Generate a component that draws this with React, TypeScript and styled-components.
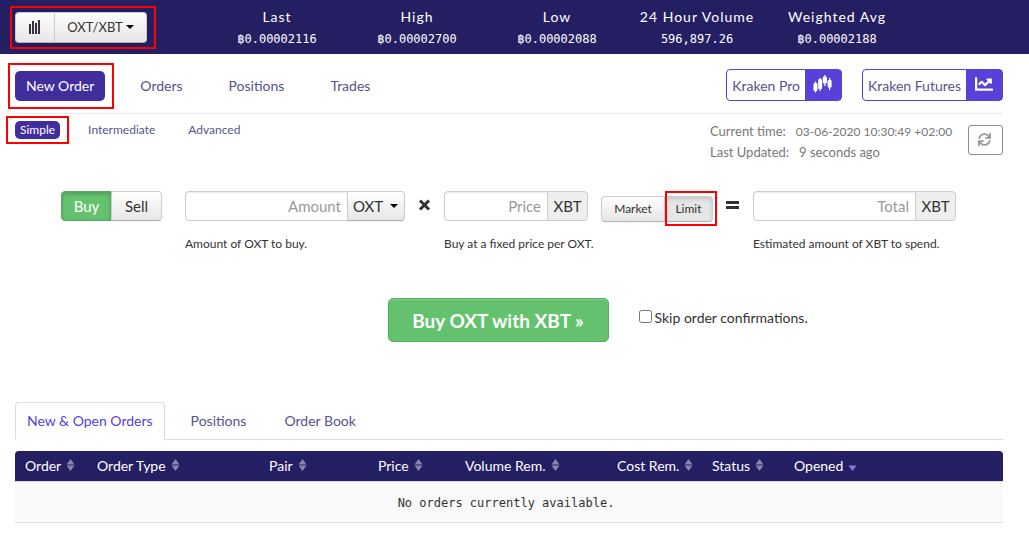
import React from 'react';
import styled, { createGlobalStyle, css } from 'styled-components';
import { FaChartLine, FaSync } from 'react-icons/fa';

const GlobalStyle = createGlobalStyle`
  *, *::before, *::after { box-sizing: border-box; }
  body { margin: 0; background: #fff; color: #333; font: 14px/20px Lato, "Open Sans", sans-serif; }
  button, input, select { font: inherit; color: inherit; margin: 0; }
  a { color: inherit; text-decoration: none; }
`;

const mono = css`
  font-family: "DejaVu Sans Mono", "Liberation Mono", monospace;
  font-size: 12px;
`;

const raised = css`
  border: 1px solid #ccc;
  border-bottom-color: #b3b3b3;
  background: linear-gradient(#fff, #e6e6e6);
  box-shadow: inset 0 1px 0 rgba(255, 255, 255, 0.2), 0 1px 2px rgba(0, 0, 0, 0.05);
`;

const Marked = styled.div`
  position: relative;
  display: flex;
`;

const Mark = styled.span<{ $inset: string }>`
  position: absolute;
  inset: ${(p) => p.$inset};
  border: 2px solid #f00;
  pointer-events: none;
`;

const Header = styled.header`
  display: flex;
  align-items: flex-start;
  height: 54px;
  padding: 12px 15px 0;
  background: #241e63;
  color: #fff;
`;

const PairButton = styled.button`
  ${raised}
  display: flex;
  align-items: center;
  justify-content: center;
  gap: 3px;
  height: 31px;
  padding: 0 12px 1px;
  color: #333;
  font-size: 13px;
  &:first-child { width: 40px; padding: 0 1px 1px 0; border-radius: 4px 0 0 4px; }
  &:nth-child(2) { width: 93px; margin-left: -1px; border-radius: 0 4px 4px 0; }
`;

const Stats = styled.dl`
  display: flex;
  margin: 0 0 0 60px;
`;

const Stat = styled.div`
  width: 140px;
  text-align: center;
`;

const StatName = styled.dt`
  margin-top: -6px;
  font-size: 14px;
  line-height: 22px;
  letter-spacing: 1px;
  white-space: nowrap;
`;

const StatValue = styled.dd`
  ${mono}
  margin: 0;
  line-height: 22px;
`;

const Page = styled.main`
  padding: 0 26px 0 15px;
`;

const Bar = styled.div`
  display: flex;
  align-items: center;
  justify-content: space-between;
  height: 60px;
  padding-top: 4px;
  border-bottom: 1px solid #e8e8f5;
`;

const Nav = styled.nav<{ $gap: number }>`
  display: flex;
  gap: ${(p) => p.$gap}px;
`;

const NavLink = styled.a<{ $active?: boolean }>`
  padding: 5px 11px;
  border-radius: 5px;
  color: ${(p) => (p.$active ? '#fff' : '#56548a')};
  background: ${(p) => (p.$active ? '#412d9c' : 'transparent')};
`;

const SubLink = styled(NavLink)`
  padding: 0 5px;
  font-size: 12px;
  line-height: 18px;
`;

const Links = styled.div`
  display: flex;
  gap: 20px;
  margin-top: -2px;
`;

const Product = styled.a`
  display: flex;
  height: 32px;
  border: 1px solid #5841d8;
  border-radius: 4px;
  background: #fff;
  color: #56548a;
  line-height: 31px;
`;

const ProductName = styled.span`
  padding: 0 5px;
`;

const ProductIcon = styled.span`
  display: flex;
  justify-content: center;
  width: 36px;
  padding-top: 5px;
  background: #5841d8;
  color: #fff;
`;

const SubBar = styled.div`
  display: flex;
  align-items: flex-start;
  justify-content: space-between;
  padding-top: 7px;
`;

const Status = styled.div`
  display: flex;
  gap: 16px;
`;

const Clock = styled.div`
  width: 242px;
  color: #777;
  font-size: 13px;
  line-height: 21px;
`;

const ClockRow = styled.div`
  display: flex;
  gap: 10px;
  white-space: nowrap;
`;

const Time = styled.time`
  font-size: 12px;
`;

const Refresh = styled.button`
  display: flex;
  align-items: center;
  justify-content: center;
  width: 35px;
  height: 30px;
  margin-top: 4px;
  padding: 0 2px 1px 0;
  border: 1px solid #8c8c8c;
  border-radius: 3px;
  background: #fff;
  color: #999;
`;

const OrderForm = styled.form`
  padding: 28px 47px 0 46px;
`;

const Fields = styled.div`
  display: flex;
  align-items: flex-start;
`;

const Sides = styled.div`
  display: flex;
  margin-right: 23px;
`;

const Side = styled.button<{ $on?: boolean }>`
  ${raised}
  width: 51px;
  height: 30px;
  margin-left: -1px;
  padding: 0;
  border-radius: 0 4px 4px 0;
  font-size: 15px;
  ${(p) =>
    p.$on &&
    css`
      margin-left: 0;
      border-color: #56ac5d;
      border-radius: 4px 0 0 4px;
      background: #64c26e;
      box-shadow: inset 0 2px 4px rgba(0, 0, 0, 0.2);
      color: #fff;
    `}
`;

const Field = styled.div<{ $grow: number }>`
  flex: ${(p) => p.$grow} 1 0;
  min-width: 0;
`;

const InputGroup = styled.div`
  display: flex;
  height: 30px;
`;

const Input = styled.input`
  flex: 1;
  min-width: 0;
  padding: 0 6px;
  border: 1px solid #ccc;
  border-radius: 4px 0 0 4px;
  box-shadow: inset 0 1px 1px rgba(0, 0, 0, 0.08);
  font-size: 15px;
  text-align: right;
  &::placeholder { color: #999; opacity: 1; }
`;

const AddOn = styled.span`
  width: 41px;
  margin-left: -1px;
  border: 1px solid #ccc;
  border-radius: 0 4px 4px 0;
  background: #eee;
  font-size: 15px;
  line-height: 28px;
  text-align: center;
`;

const UnitBox = styled.span`
  ${raised}
  position: relative;
  display: flex;
  width: 58px;
  margin-left: -1px;
  border-radius: 0 4px 4px 0;
  & > svg { position: absolute; right: 6px; top: 12px; pointer-events: none; }
`;

const Unit = styled.select`
  flex: 1;
  appearance: none;
  padding: 0 5px;
  border: 0;
  background: none;
  font-size: 15px;
`;

const Help = styled.p`
  margin: 14px 0 0;
  font-size: 12px;
  line-height: 18px;
  white-space: nowrap;
`;

const Operator = styled.span`
  display: flex;
  margin: 7px 13px 0;
`;

const Kinds = styled(Marked)`
  margin: 5px 0 0 13px;
`;

const Kind = styled.button<{ $on?: boolean }>`
  ${raised}
  width: 64px;
  height: 26px;
  padding: 0;
  border-radius: 4px 0 0 4px;
  font-size: 12px;
  ${(p) =>
    p.$on &&
    css`
      width: 49px;
      margin-left: -1px;
      border-radius: 0 4px 4px 0;
      background: #e6e6e6;
      box-shadow: inset 0 2px 4px rgba(0, 0, 0, 0.15);
    `}
`;

const SubmitRow = styled.div`
  display: grid;
  grid-template-columns: 1fr auto 1fr;
  align-items: start;
  column-gap: 30px;
  margin-top: 45px;
  padding-right: 22px;
`;

const Submit = styled.button`
  grid-column: 2;
  width: 221px;
  height: 44px;
  padding: 1px 0 0;
  border: 1px solid #56ac5d;
  border-radius: 5px;
  background: #64c26e;
  box-shadow: inset 0 1px 0 rgba(255, 255, 255, 0.2);
  color: #fff;
  font-size: 19px;
  font-weight: 700;
`;

const Skip = styled.label`
  display: flex;
  align-items: center;
  gap: 3px;
  padding-top: 10px;
  white-space: nowrap;
  & > input { width: 13px; height: 13px; margin-bottom: 3px; }
`;

const Tabs = styled.div`
  display: flex;
  margin-top: 60px;
  border-bottom: 1px solid #ddd;
`;

const Tab = styled.button<{ $on?: boolean }>`
  height: 38px;
  margin: 0 0 -1px;
  padding: 0 11px;
  border: 1px solid transparent;
  border-radius: 4px 4px 0 0;
  background: none;
  color: #56548a;
  & + & { margin-left: 14px; }
  ${(p) =>
    p.$on &&
    css`
      border-color: #ddd #ddd #fff;
      background: #fff;
      color: #5841d8;
    `}
`;

const Table = styled.table`
  width: 100%;
  margin-top: 11px;
  table-layout: fixed;
  border-collapse: separate;
  border-spacing: 0;
`;

const Head = styled.th<{ $width: number }>`
  width: ${(p) => p.$width}px;
  height: 30px;
  padding: 0 0 0 10px;
  background: #241e63;
  color: #fff;
  font-weight: 400;
  text-align: left;
  white-space: nowrap;
  &:first-child { border-top-left-radius: 4px; }
  &:last-child { border-top-right-radius: 4px; }
  & > svg { margin-left: 5px; }
`;

const Empty = styled.td`
  ${mono}
  height: 42px;
  padding: 1px 6px 0 0;
  border: solid #ddd;
  border-width: 1px 0;
  background: #f9f9f9;
  text-align: center;
`;

const Caret = () => (
  <svg width="8" height="4" viewBox="0 0 8 4" aria-hidden="true">
    <path d="M0 0h8L4 4z" fill="#000" />
  </svg>
);

const BarsIcon = () => (
  <svg width="11" height="14" viewBox="0 0 11 14" aria-hidden="true">
    <path d="M0 4h2v10H0zM3 1h2v13H3zM6 3h2v11H6zM9 0h2v14H9z" fill="#3a3040" />
  </svg>
);

const CandlesIcon = () => (
  <svg width="19" height="18" viewBox="0 0 19 18" fill="#fff" aria-hidden="true">
    <g stroke="#fff" strokeWidth="1.2">
      <path d="M2.500 6.500v11M7.200 3v13M11.900 0v11M16.600 3v12" />
    </g>
    <rect x="0.500" y="8" width="4" height="8" rx="1" />
    <rect x="5.200" y="4" width="4" height="10" rx="1" />
    <rect x="9.900" y="1.500" width="4" height="7" rx="1" />
    <rect x="14.600" y="5" width="4" height="7.500" rx="1" />
  </svg>
);

const TimesIcon = () => (
  <svg width="13" height="14" viewBox="0 0 13 14" aria-hidden="true">
    <path d="M2 2.500l9 9M11 2.500l-9 9" stroke="#333" strokeWidth="3" />
  </svg>
);

const EqualsIcon = () => (
  <svg width="14" height="14" viewBox="0 0 14 14" aria-hidden="true">
    <path d="M0 3h13v3H0zM0 8h13v3H0z" fill="#333" />
  </svg>
);

const SortIcon = ({ down }: { down?: boolean }) => (
  <svg width="9" height="12" viewBox="0 0 9 12" aria-hidden="true">
    {!down && <path d="M4.500 0L8.500 5.500h-8z" fill="#8783ab" />}
    <path d="M.500 6.500h8L4.500 12z" fill={down ? '#8a78e8' : '#8783ab'} />
  </svg>
);

const stats = [
  ['Last', '฿0.00002116'],
  ['High', '฿0.00002700'],
  ['Low', '฿0.00002088'],
  ['24 Hour Volume', '596,897.26'],
  ['Weighted Avg', '฿0.00002188'],
];

const columns: [string, number][] = [
  ['Order', 72],
  ['Order Type', 172],
  ['Pair', 109],
  ['Price', 87],
  ['Volume Rem.', 152],
  ['Cost Rem.', 95],
  ['Status', 82],
  ['Opened', 219],
];

export default function App() {
  return (
    <>
      <GlobalStyle />
      <Header>
        <Marked>
          <PairButton type="button" aria-label="Chart"><BarsIcon /></PairButton>
          <PairButton type="button">OXT/XBT <Caret /></PairButton>
          <Mark $inset="-6px -9px -6px -5px" />
        </Marked>
        <Stats>
          {stats.map(([name, value]) => (
            <Stat key={name}>
              <StatName>{name}</StatName>
              <StatValue>{value}</StatValue>
            </Stat>
          ))}
        </Stats>
      </Header>
      <Page>
        <Bar>
          <Nav $gap={24}>
            <Marked>
              <NavLink href="#new" $active>New Order</NavLink>
              <Mark $inset="-8px -9px -8px -7px" />
            </Marked>
            <NavLink href="#orders">Orders</NavLink>
            <NavLink href="#positions">Positions</NavLink>
            <NavLink href="#trades">Trades</NavLink>
          </Nav>
          <Links>
            <Product href="#pro">
              <ProductName>Kraken Pro</ProductName>
              <ProductIcon><CandlesIcon /></ProductIcon>
            </Product>
            <Product href="#futures">
              <ProductName>Kraken Futures</ProductName>
              <ProductIcon><FaChartLine size={18} /></ProductIcon>
            </Product>
          </Links>
        </Bar>
        <SubBar>
          <Nav $gap={23}>
            <Marked>
              <SubLink href="#simple" $active>Simple</SubLink>
              <Mark $inset="-5px -9px -5px -9px" />
            </Marked>
            <SubLink href="#intermediate">Intermediate</SubLink>
            <SubLink href="#advanced">Advanced</SubLink>
          </Nav>
          <Status>
            <Clock>
              <ClockRow><span>Current time:</span><Time>03-06-2020 10:30:49 +02:00</Time></ClockRow>
              <ClockRow><span>Last Updated:</span><span>9 seconds ago</span></ClockRow>
            </Clock>
            <Refresh type="button" aria-label="Refresh"><FaSync size={13} /></Refresh>
          </Status>
        </SubBar>
        <OrderForm>
          <Fields>
            <Sides>
              <Side type="button" $on>Buy</Side>
              <Side type="button">Sell</Side>
            </Sides>
            <Field $grow={220}>
              <InputGroup>
                <Input aria-label="Amount" placeholder="Amount" />
                <UnitBox>
                  <Unit aria-label="Unit"><option>OXT</option><option>XBT</option></Unit>
                  <Caret />
                </UnitBox>
              </InputGroup>
              <Help>Amount of OXT to buy.</Help>
            </Field>
            <Operator><TimesIcon /></Operator>
            <Field $grow={144}>
              <InputGroup>
                <Input aria-label="Price" placeholder="Price" />
                <AddOn>XBT</AddOn>
              </InputGroup>
              <Help>Buy at a fixed price per OXT.</Help>
            </Field>
            <Kinds>
              <Kind type="button">Market</Kind>
              <Kind type="button" $on>Limit</Kind>
              <Mark $inset="-5px -4px -4px 64px" />
            </Kinds>
            <Operator><EqualsIcon /></Operator>
            <Field $grow={203}>
              <InputGroup>
                <Input aria-label="Total" placeholder="Total" />
                <AddOn>XBT</AddOn>
              </InputGroup>
              <Help>Estimated amount of XBT to spend.</Help>
            </Field>
          </Fields>
        </OrderForm>
        <SubmitRow>
          <Submit type="button">Buy OXT with XBT »</Submit>
          <Skip><input type="checkbox" />Skip order confirmations.</Skip>
        </SubmitRow>
        <Tabs role="tablist">
          <Tab type="button" role="tab" $on>New &amp; Open Orders</Tab>
          <Tab type="button" role="tab">Positions</Tab>
          <Tab type="button" role="tab">Order Book</Tab>
        </Tabs>
        <Table>
          <thead>
            <tr>
              {columns.map(([name, width]) => (
                <Head key={name} $width={width}>{name}<SortIcon down={name === 'Opened'} /></Head>
              ))}
            </tr>
          </thead>
          <tbody>
            <tr><Empty colSpan={8}>No orders currently available.</Empty></tr>
          </tbody>
        </Table>
      </Page>
    </>
  );
}
